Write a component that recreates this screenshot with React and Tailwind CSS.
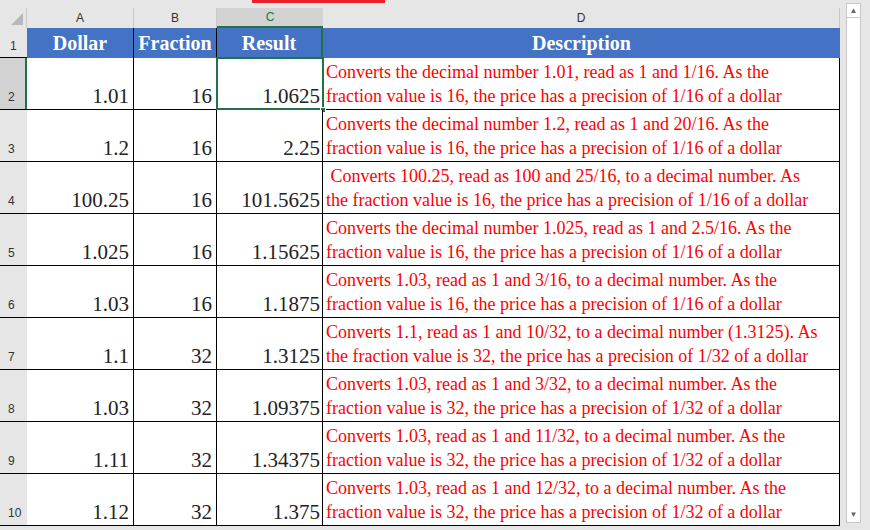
const rows = [
  ['1.01', '16', '1.0625', 'Converts the decimal number 1.01, read as 1 and 1/16. As the', 'fraction value is 16, the price has a precision of 1/16 of a dollar'],
  ['1.2', '16', '2.25', 'Converts the decimal number 1.2, read as 1 and 20/16. As the', 'fraction value is 16, the price has a precision of 1/16 of a dollar'],
  ['100.25', '16', '101.5625', '\u00a0Converts 100.25, read as 100 and 25/16, to a decimal number. As', 'the fraction value is 16, the price has a precision of 1/16 of a dollar'],
  ['1.025', '16', '1.15625', 'Converts the decimal number 1.025, read as 1 and 2.5/16. As the', 'fraction value is 16, the price has a precision of 1/16 of a dollar'],
  ['1.03', '16', '1.1875', 'Converts 1.03, read as 1 and 3/16, to a decimal number. As the', 'fraction value is 16, the price has a precision of 1/16 of a dollar'],
  ['1.1', '32', '1.3125', 'Converts 1.1, read as 1 and 10/32, to a decimal number (1.3125). As', 'the fraction value is 32, the price has a precision of 1/32 of a dollar'],
  ['1.03', '32', '1.09375', 'Converts 1.03, read as 1 and 3/32, to a decimal number. As the', 'fraction value is 32, the price has a precision of 1/32 of a dollar'],
  ['1.11', '32', '1.34375', 'Converts 1.03, read as 1 and 11/32, to a decimal number. As the', 'fraction value is 32, the price has a precision of 1/32 of a dollar'],
  ['1.12', '32', '1.375', 'Converts 1.03, read as 1 and 12/32, to a decimal number. As the', 'fraction value is 32, the price has a precision of 1/32 of a dollar'],
];

const cols = 'grid grid-cols-[27px_107px_83px_106px_517px]';

export default function App() {
  return (
    <div className="w-[870px] h-[530px] bg-[#e6e6e6] relative overflow-hidden" style={{ fontFamily: '"Liberation Serif", serif' }}>
      <div className="absolute left-[252px] top-0 w-[133px] h-[3px] bg-[#e8202a]" />
      <div className="h-[8px]" />
      <div className="flex">
        <div className="w-[840px]">
          {/* column letters */}
          <div className={`${cols} h-[20px] text-[12px] text-[#333]`} style={{ fontFamily: '"Liberation Sans", sans-serif' }}>
            <div className="relative border-r border-[#c8c8c8]">
              <div className="absolute right-[3px] bottom-[3px] w-0 h-0 border-l-[12px] border-l-transparent border-b-[12px] border-b-[#b8b8b8]" />
            </div>
            <div className="flex items-center justify-center border-r border-[#c8c8c8]">A</div>
            <div className="flex items-center justify-center border-r border-[#c8c8c8]">B</div>
            <div className="flex items-center justify-center bg-[#d2d2d2] border-b-2 border-[#217346] text-[#217346]">C</div>
            <div className="flex items-center justify-center border-r border-[#c8c8c8]">D</div>
          </div>
          {/* header row */}
          <div className={`${cols} h-[30px] border-b border-black`}>
            <div className="flex items-end pb-[3px] pl-[10px] text-[12px] text-[#333]" style={{ fontFamily: '"Liberation Sans", sans-serif' }}>1</div>
            {['Dollar', 'Fraction', 'Result', 'Description'].map((h, i) => (
              <div key={h} className={`bg-[#4472c4] text-white font-bold text-[20px] flex items-center justify-center ${i < 3 ? 'border-r border-black' : ''} ${i === 2 ? 'border-r-2 border-r-[#217346]' : ''}`}>{h}</div>
            ))}
          </div>
          {rows.map((r, i) => (
            <div key={i} className={`${cols} h-[52px] border-b border-black`}>
              <div className={`flex items-end pb-[3px] pl-[8px] text-[12px] text-[#333] ${i === 0 ? 'bg-[#d2d2d2] border-r-2 border-[#217346]' : ''}`} style={{ fontFamily: '"Liberation Sans", sans-serif' }}>{i + 2}</div>
              <div className="bg-white border-r border-black flex items-end justify-end pr-[4px] text-[21px] text-[#222] leading-[26px]">{r[0]}</div>
              <div className="bg-white border-r border-black flex items-end justify-end pr-[4px] text-[21px] text-[#222] leading-[26px]">{r[1]}</div>
              <div className={`bg-white border-r border-black flex items-end justify-end pr-[2px] text-[21px] text-[#222] leading-[26px] relative ${i === 0 ? 'outline-2 outline-[#217346] -outline-offset-1' : ''}`}>
                {r[2]}
                {i === 0 && <div className="absolute -right-[4px] -bottom-[4px] w-[6px] h-[6px] bg-[#217346] border border-white" />}
              </div>
              <div className="bg-white border-r border-black flex flex-col justify-center pl-[3px] text-[18px] text-[#ff0000] leading-[24px] whitespace-nowrap overflow-hidden">
                <div>{r[3]}</div>
                <div>{r[4]}</div>
              </div>
            </div>
          ))}
        </div>
        {/* vertical scrollbar */}
        <div className="ml-[6px] w-[15px] h-[520px] -mt-[5px] bg-white border border-[#c8c8c8] flex flex-col justify-between">
          <div className="h-[14px] flex items-center justify-center border-b border-[#c8c8c8] text-[8px] text-[#666]">▲</div>
          <div className="h-[14px] flex items-center justify-center text-[8px] text-[#666]">▼</div>
        </div>
      </div>
    </div>
  );
}
